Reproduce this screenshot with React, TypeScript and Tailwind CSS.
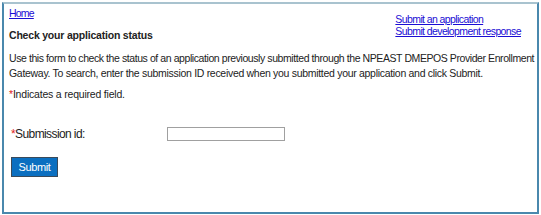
export default function App() {
  return (
    <div className="h-[215px] w-[541px] bg-white pl-[2px] pt-[2px] font-['Liberation_Sans',sans-serif] text-[10px] leading-[12px] text-[#222]">
      <div className="flex h-[212px] w-[537px] flex-col border-2 border-[#4a88ad] border-t-[#a9c3cf] px-[5px] pt-[3px]">
        <div className="flex justify-between">
          <div className="flex flex-col">
            <a href="#" className="text-[10.5px] tracking-[-0.8px] text-[#1a0dd4] underline">
              Home
            </a>
            <h1 className="mt-[10px] text-[10.5px] font-bold tracking-[-0.2px]">Check your application status</h1>
          </div>
          <div className="mr-[11px] mt-[6px] flex flex-col whitespace-nowrap text-[10.5px] tracking-[-0.6px]">
            <a href="#" className="text-[#1a0dd4] underline">
              Submit an application
            </a>
            <a href="#" className="text-[#1a0dd4] underline">
              Submit development response
            </a>
          </div>
        </div>
        <p className="mt-[10px] flex flex-col whitespace-nowrap text-[10.5px] leading-[15px] tracking-[-0.3px]">
          <span className="tracking-[-0.42px]">
            Use this form to check the status of an application previously submitted through the NPEAST DMEPOS Provider Enrollment
          </span>
          <span>
            Gateway. To search, enter the submission ID received when you submitted your application and click Submit.
          </span>
        </p>
        <p className="mt-[7px] text-[10.5px] tracking-[-0.2px]">
          <span className="text-[#e02020]">*</span>Indicates a required field.
        </p>
        <div className="mt-[26px] flex items-center">
          <label className="w-[158px] pl-[2px] text-[12px] leading-[16px] tracking-[-0.6px] text-[#222]">
            <span className="text-[#e02020]">*</span>Submission id:
          </label>
          <input type="text" className="h-[14px] w-[118px] border border-[#a0a0a0] bg-white" />
        </div>
        <div className="mt-[15px] pl-[2px]">
          <button className="h-[20px] w-[47px] border border-[#3a4a5a] bg-[#0b6fc0] text-[11px] leading-[18px] tracking-[-0.4px] text-white">
            Submit
          </button>
        </div>
      </div>
    </div>
  );
}
